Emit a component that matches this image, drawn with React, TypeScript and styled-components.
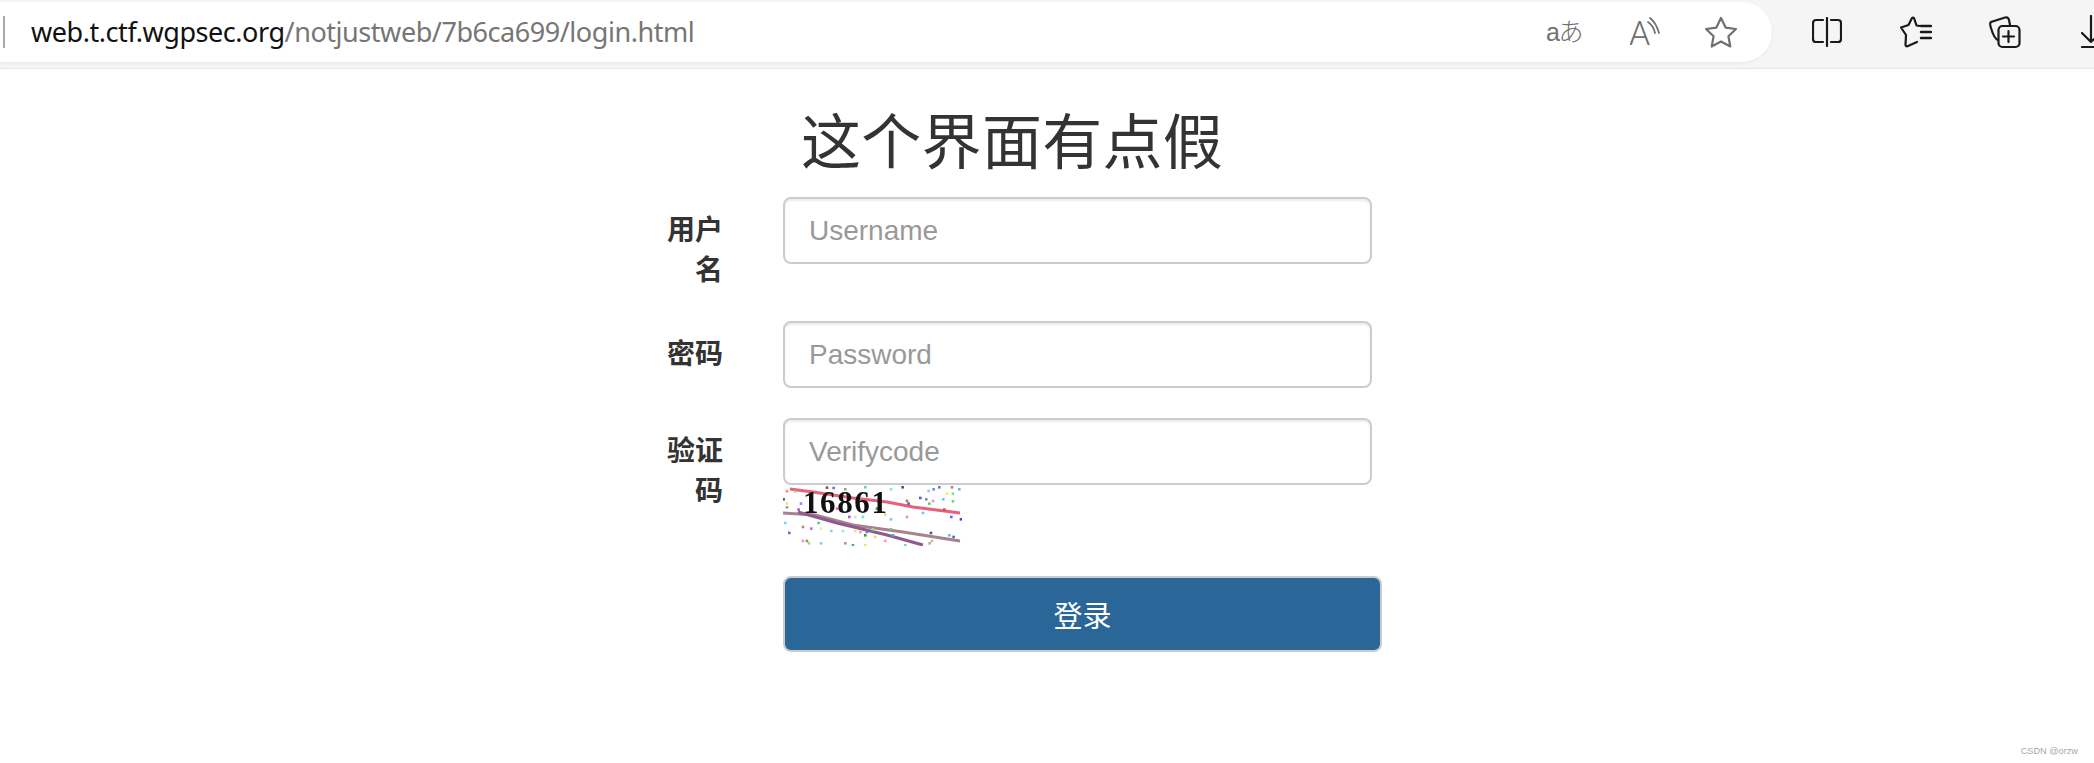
import React from "react";
import styled, { createGlobalStyle } from "styled-components";

const GlobalStyle = createGlobalStyle`
  html, body {
    margin: 0;
    padding: 0;
    background: #fff;
  }
  body {
    font-family: "Liberation Sans", "Noto Sans CJK SC", sans-serif;
    color: #333;
  }
`;

const Page = styled.div`
  position: relative;
  width: 2094px;
  height: 763px;
  overflow: hidden;
`;

/* browser chrome */
const Toolbar = styled.header`
  display: flex;
  align-items: flex-start;
  height: 69px;
  padding-top: 2px;
  box-sizing: border-box;
  background: #f5f5f5;
  border-bottom: 1px solid #e8e8e8;
`;
const AddressBar = styled.div`
  display: flex;
  align-items: center;
  flex: none;
  width: 1772px;
  height: 60px;
  padding-right: 34px;
  box-sizing: border-box;
  background: #fff;
  border-radius: 0 30px 30px 0;
  box-shadow: 0 1px 3px rgba(0, 0, 0, 0.06);
`;
const Divider = styled.span`
  flex: none;
  width: 2px;
  height: 32px;
  margin: 0 26px 0 3px;
  background: #a8a8a8;
`;
const Url = styled.div`
  flex: 1;
  min-width: 0;
  font-family: "Noto Sans", sans-serif;
  font-size: 27px;
  letter-spacing: -0.45px;
  line-height: 40px;
  white-space: nowrap;
  color: #767676;
`;
const Host = styled.span`
  color: #111;
`;
const AddressIcons = styled.div`
  display: flex;
  align-items: center;
  gap: 42px;
`;
const ToolbarIcons = styled.div`
  display: flex;
  align-items: center;
  gap: 56px;
  height: 60px;
  padding-left: 40px;
`;
const TranslateGlyph = styled.span`
  width: 42px;
  font-family: "Liberation Sans", "Noto Sans CJK JP", sans-serif;
  font-size: 25px;
  font-weight: 300;
  letter-spacing: -1.5px;
  line-height: 36px;
  white-space: nowrap;
  color: #707070;
`;
const DownloadSvg = styled.svg`
  flex: none;
  margin-left: 3px;
`;

/* login form */
const Main = styled.main`
  padding: 42px 0 0 659px;
`;
const Title = styled.h1`
  margin: 0 0 20px 142px;
  font-size: 60px;
  font-weight: 400;
  letter-spacing: 0.3px;
  line-height: 66px;
  color: #333;
`;
const Form = styled.form`
  display: flex;
  flex-direction: column;
  gap: 30px;
`;
const Row = styled.div`
  display: grid;
  grid-template-columns: 64px 589px;
  column-gap: 60px;
  align-items: start;
`;
const Label = styled.label`
  padding-top: 14px;
  font-size: 28px;
  font-weight: 700;
  line-height: 40px;
  text-align: right;
  color: #333;
`;
const Field = styled.div`
  display: flex;
  flex-direction: column;
`;
const Input = styled.input`
  display: block;
  width: 100%;
  height: 67px;
  padding: 0 24px;
  box-sizing: border-box;
  border: 2px solid #ccc;
  border-radius: 8px;
  outline: none;
  background: #fff;
  box-shadow: inset 0 2px 2px rgba(0, 0, 0, 0.075);
  font-family: inherit;
  font-size: 28px;
  color: #555;

  &::placeholder {
    color: #999;
    opacity: 1;
  }
`;
const SubmitButton = styled.button`
  grid-column: 2;
  width: 599px;
  height: 76px;
  border: 2px solid #ccc;
  border-radius: 8px;
  background: #2b6699;
  font-family: inherit;
  font-size: 29px;
  color: #fff;
`;
const CaptchaSvg = styled.svg`
  display: block;
  width: 179px;
  height: 60px;
  margin-top: 1px;
  filter: blur(0.6px);
`;
const Watermark = styled.div`
  position: absolute;
  right: 16px;
  bottom: 7px;
  font-size: 9.2px;
  color: #a8a8a8;
`;

const CAPTCHA_DOTS: [number, number, string][] = [
  [50, 48, "#f88"], [170, 37, "#855"], [190, 38, "#77a"], [225, 42, "#8a8"], [285, 36, "#6cc"],
  [362, 42, "#7ec"], [397, 36, "#358"], [40, 72, "#55a"], [50, 85, "#fd6"], [50, 96, "#7aa"],
  [92, 85, "#88f"], [75, 48, "#9c8"], [410, 77, "#c66"], [415, 85, "#46a"], [450, 68, "#55c"],
  [468, 72, "#88b"], [475, 47, "#8cf"], [490, 42, "#68f"], [507, 36, "#77a"], [530, 55, "#ee6"],
  [545, 36, "#a88"], [567, 42, "#7af"], [548, 55, "#8d8"], [519, 72, "#6ce"], [548, 78, "#6d6"],
  [488, 77, "#e8e"], [477, 85, "#6c6"], [85, 103, "#a5c"], [200, 100, "#f6a"], [320, 100, "#494"],
  [345, 118, "#ed8"], [458, 113, "#6cf"], [522, 103, "#b55"], [237, 125, "#c4e"], [255, 125, "#bec"],
  [278, 125, "#7dc"], [362, 132, "#7cd"], [410, 125, "#f88"], [543, 125, "#66d"], [572, 132, "#44b"],
  [45, 143, "#6df"], [145, 143, "#6c6"], [98, 155, "#a87"], [123, 160, "#c6e"], [152, 160, "#ee9"],
  [183, 167, "#8dc"], [218, 167, "#8ee"], [255, 167, "#ed8"], [270, 170, "#ea8"], [285, 180, "#493"],
  [308, 162, "#7e7"], [290, 170, "#77b"], [315, 185, "#ed6"], [362, 162, "#6c6"], [368, 180, "#5ac"],
  [482, 173, "#558"], [537, 180, "#6bd"], [550, 185, "#66a"], [57, 173, "#66e"], [98, 197, "#e9c"],
  [110, 197, "#a85"], [116, 204, "#7e7"], [152, 204, "#8cf"], [225, 204, "#a98"], [248, 210, "#4a9"],
  [285, 210, "#de6"], [345, 197, "#f9a"], [405, 210, "#7cd"], [478, 204, "#ca8"], [485, 197, "#bbb"],
];

function Captcha() {
  return (
    <CaptchaSvg viewBox="0 0 179 60">
      <polyline points="7,3 30,6 70,12 104,16 130,21 177,27" fill="none" stroke="#e8607a" strokeWidth="3.2" />
      <polyline points="0,27 32,29 70,39 120,46 177,55" fill="none" stroke="#a88090" strokeWidth="3.2" />
      <polyline points="15,26 54,37 104,49 140,59" fill="none" stroke="#8e5a90" strokeWidth="3.2" />
      {CAPTCHA_DOTS.map(([x, y, color]) => (
        <rect key={`${x}-${y}`} x={x / 3 - 14} y={y / 3 - 12} width="2.6" height="2.6" fill={color} />
      ))}
      <text x="20" y="27" fontFamily="Liberation Serif, serif" fontWeight="700" fontSize="31" letterSpacing="1.6" fill="#111">
        16861
      </text>
    </CaptchaSvg>
  );
}

function ReadAloudIcon() {
  return (
    <svg width="32" height="30" viewBox="0 0 32 30" fill="none" stroke="#707070" strokeWidth="1.8" strokeLinecap="round">
      <text x="-1" y="28" fontFamily="Roboto, sans-serif" fontWeight="300" fontSize="34" fill="#707070" stroke="none">A</text>
      <path d="M18 5c3 2 6 6 7 11" />
      <path d="M20 1c4 3 7 8 9 15" />
    </svg>
  );
}

function StarIcon() {
  return (
    <svg width="34" height="32" viewBox="0 0 34 32" fill="none" stroke="#707070" strokeWidth="2.2" strokeLinejoin="round">
      <path d="M17 2l4.600 9.600 10.400 1.400-7.600 7.200 1.900 10.300L17 25.500l-9.300 5 1.900-10.300L2 13l10.400-1.400z" />
    </svg>
  );
}

function SplitIcon() {
  return (
    <svg width="30" height="30" viewBox="0 0 30 30" fill="none" stroke="#1a1a1a" strokeWidth="2.2" strokeLinecap="round">
      <path d="M11 3H4a3 3 0 0 0-3 3v16a3 3 0 0 0 3 3h7" />
      <path d="M19 3h7a3 3 0 0 1 3 3v16a3 3 0 0 1-3 3h-7" />
      <path d="M15 1v28" />
    </svg>
  );
}

function FavoritesIcon() {
  return (
    <svg width="34" height="32" viewBox="0 0 34 32" fill="none" stroke="#1a1a1a" strokeWidth="2.2" strokeLinejoin="round" strokeLinecap="round">
      <path d="M22 10l-3.500-.5L16 2q-1-1-2 0l-3.500 7L3 11.500l5 7.500-.5 10q.5 2 2.500 1l9-4" />
      <path d="M23 10h10M23 16h10M23 22h10" strokeWidth="2.500" />
    </svg>
  );
}

function CollectionsIcon() {
  return (
    <svg width="34" height="34" viewBox="0 0 34 34" fill="none" stroke="#1a1a1a" strokeWidth="2.2" strokeLinecap="round">
      <path d="M10 25C7 24 5 20 3 13 2 10 1.500 8 3 7L17 2.500C19 2 20.500 3 21 5l1 5" />
      <rect x="10.500" y="11" width="21" height="21" rx="4" />
      <path d="M20.500 16v11M15 21.500h11" />
    </svg>
  );
}

function DownloadIcon() {
  return (
    <DownloadSvg width="26" height="34" viewBox="0 0 26 34" fill="none" stroke="#1a1a1a" strokeWidth="2.2" strokeLinecap="round" strokeLinejoin="round">
      <path d="M10 1v26M1 18l9 9 9-9" />
      <path d="M1 32h24" />
    </DownloadSvg>
  );
}

export default function App() {
  return (
    <Page>
      <GlobalStyle />
      <Toolbar>
        <AddressBar>
          <Divider />
          <Url>
            <Host>web.t.ctf.wgpsec.org</Host>/notjustweb/7b6ca699/login.html
          </Url>
          <AddressIcons>
            <TranslateGlyph>aあ</TranslateGlyph>
            <ReadAloudIcon />
            <StarIcon />
          </AddressIcons>
        </AddressBar>
        <ToolbarIcons>
          <SplitIcon />
          <FavoritesIcon />
          <CollectionsIcon />
          <DownloadIcon />
        </ToolbarIcons>
      </Toolbar>
      <Main>
        <Title>这个界面有点假</Title>
        <Form onSubmit={(e) => e.preventDefault()}>
          <Row>
            <Label>用户名</Label>
            <Input placeholder="Username" />
          </Row>
          <Row>
            <Label>密码</Label>
            <Input type="password" placeholder="Password" />
          </Row>
          <Row>
            <Label>验证码</Label>
            <Field>
              <Input placeholder="Verifycode" />
              <Captcha />
            </Field>
          </Row>
          <Row>
            <SubmitButton type="submit">登录</SubmitButton>
          </Row>
        </Form>
      </Main>
      <Watermark>CSDN @orzw</Watermark>
    </Page>
  );
}
